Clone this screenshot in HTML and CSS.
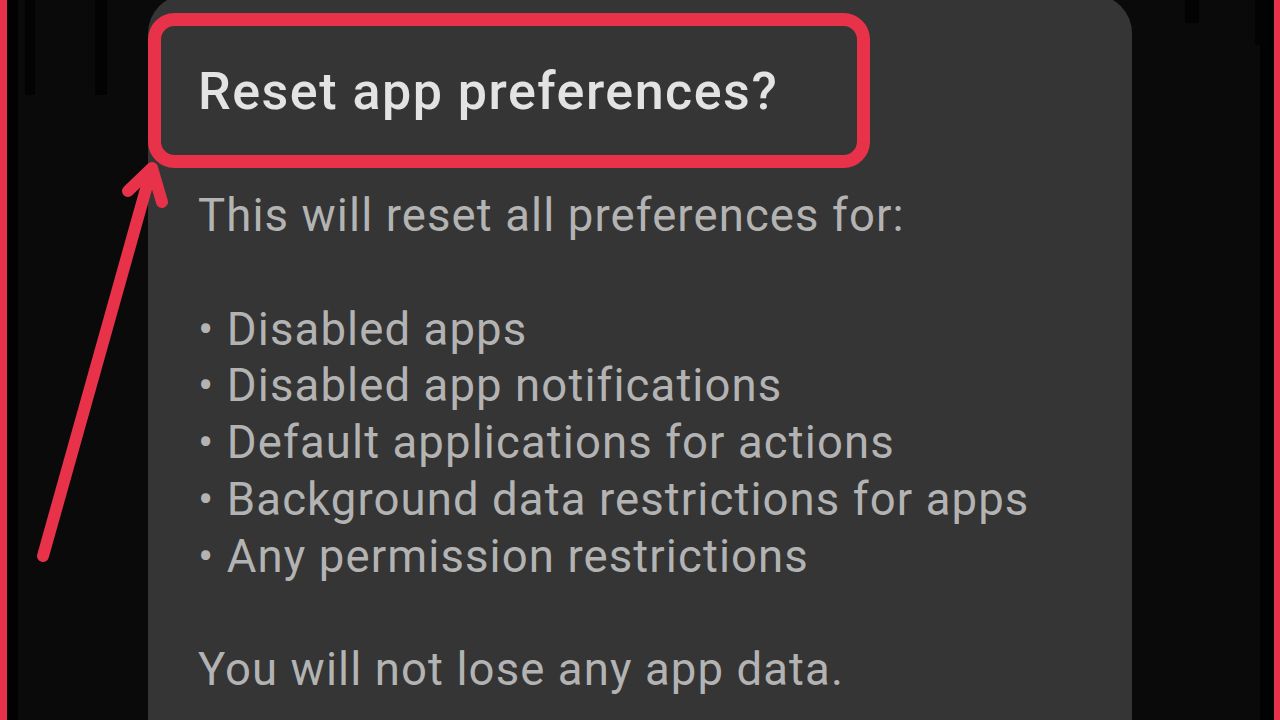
FILE: index.html
```html
<!DOCTYPE html>
<html lang="en">
<head>
<meta charset="utf-8">
<title>Reset app preferences?</title>
<link rel="stylesheet" href="styles.css">
</head>
<body>
<div class="page">
  <span class="mark mark-a"></span>
  <span class="mark mark-b"></span>
  <span class="mark mark-c"></span>
  <span class="mark mark-d"></span>
  <section class="dialog">
    <h1 class="title">Reset app preferences?</h1>
    <div class="body">
      <p class="line">This will reset all preferences for:</p>
      <ul class="items">
        <li>• Disabled apps</li>
        <li>• Disabled app notifications</li>
        <li>• Default applications for actions</li>
        <li>• Background data restrictions for apps</li>
        <li>• Any permission restrictions</li>
      </ul>
      <p class="line">You will not lose any app data.</p>
    </div>
  </section>
  <svg class="annot" width="1280" height="720" viewBox="0 0 1280 720" aria-hidden="true">
    <rect x="154.5" y="19.5" width="709" height="142" rx="20" ry="20" fill="none" stroke="#e8324a" stroke-width="13"/>
    <path d="M43 556 L151 171" fill="none" stroke="#e8324a" stroke-width="12" stroke-linecap="round"/>
    <path d="M128 191 L152 168 L162 202" fill="none" stroke="#e8324a" stroke-width="12" stroke-linecap="round" stroke-linejoin="round"/>
  </svg>
</div>
</body>
</html>
```
FILE: styles.css
```css
html, body {
  margin: 0;
  padding: 0;
  background: #090909;
}
.page {
  position: relative;
  width: 1280px;
  height: 720px;
  box-sizing: border-box;
  overflow: hidden;
  background: #0a0a0a;
  border-left: 7px solid #e8324a;
  border-right: 6px solid #e8324a;
  box-shadow: inset 11px 0 0 #020202, inset -14px 0 0 #020202;
  padding-left: 141px;
  font-family: Roboto, "Liberation Sans", sans-serif;
}
.dialog {
  width: 984px;
  height: 760px;
  margin-top: -5px;
  box-sizing: border-box;
  background: #353535;
  border-radius: 38px 38px 0 0;
  padding: 67px 0 0 50px;
}
.title {
  margin: 0;
  font-size: 52px;
  line-height: 60px;
  font-weight: 500;
  color: #e3e3e3;
  letter-spacing: 1.5px;
}
.body {
  margin-top: 66px;
  font-size: 45.5px;
  line-height: 56.8px;
  color: #b3b3b3;
  letter-spacing: 1.1px;
}
.line {
  margin: 0;
}
.items {
  list-style: none;
  margin: 56.8px 0;
  padding: 0;
}
.mark {
  position: absolute;
  top: 0;
  background: #030303;
}
.mark-a { left: 18px; width: 10px; height: 95px; }
.mark-b { left: 88px; width: 12px; height: 95px; }
.mark-c { left: 1178px; width: 14px; height: 23px; }
.mark-d { left: 1248px; width: 12px; height: 45px; }
.annot {
  position: absolute;
  left: -7px;
  top: 0;
}
```
